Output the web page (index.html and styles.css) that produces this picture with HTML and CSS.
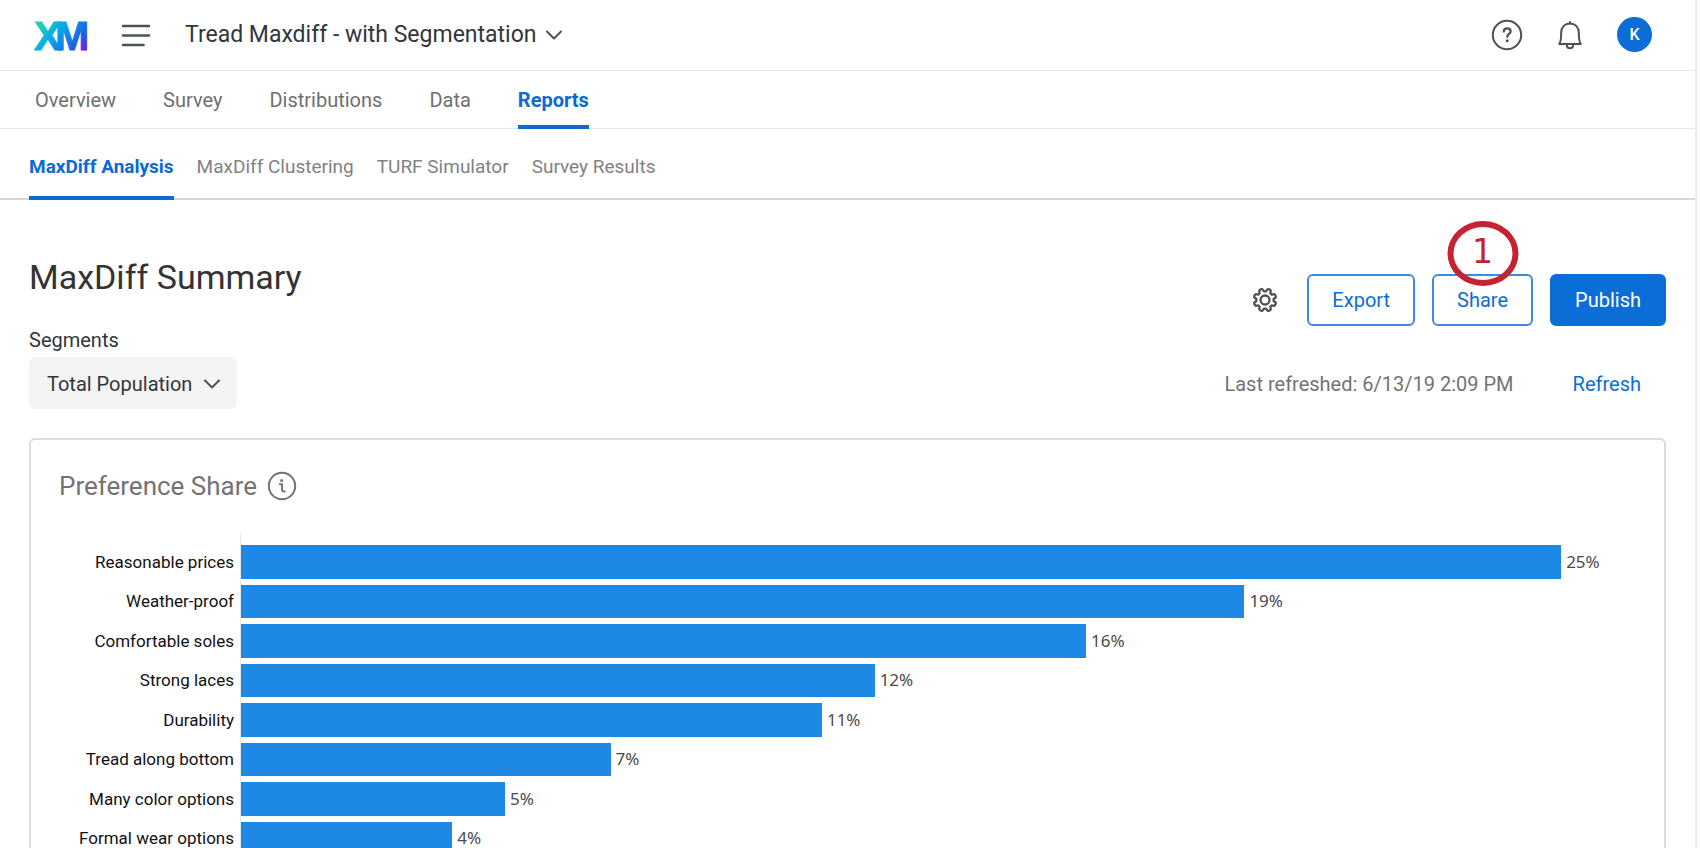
FILE: index.html
```html
<!DOCTYPE html>
<html lang="en">
<head>
<meta charset="utf-8">
<meta name="viewport" content="width=device-width, initial-scale=1">
<title>MaxDiff Summary</title>
<link rel="stylesheet" href="styles.css">
</head>
<body>
<div class="app">
  <header class="topbar">
    <a class="logo" href="#" aria-label="XM home">
      <svg width="60" height="54" viewBox="0 -10 60 54">
        <defs>
          <linearGradient id="xm" gradientUnits="userSpaceOnUse" x1="6" y1="0" x2="50" y2="36">
            <stop offset="0" stop-color="#21dbaa"/>
            <stop offset="0.4" stop-color="#06a6ee"/>
            <stop offset="0.75" stop-color="#1668e0"/>
            <stop offset="1" stop-color="#6a1be8"/>
          </linearGradient>
        </defs>
        <text class="logo-text" x="0 21" y="32" fill="url(#xm)" stroke="url(#xm)">XM</text>
      </svg>
    </a>
    <button class="icon-btn menu-btn" type="button" aria-label="Menu">
      <svg width="30" height="24" viewBox="0 0 30 24" fill="none" stroke="#4d5258" stroke-width="2.6" stroke-linecap="round"><path d="M2 3h26M2 12.500h26M2 22h20.500"/></svg>
    </button>
    <button class="project-btn" type="button">Tread Maxdiff - with Segmentation
      <svg width="18" height="12" viewBox="0 0 18 12" fill="none" stroke="#4d5258" stroke-width="2" stroke-linecap="round" stroke-linejoin="round"><path d="M2 2.500l7 7 7-7"/></svg>
    </button>
    <div class="tools">
      <button class="icon-btn" type="button" aria-label="Help">
        <svg width="32" height="32" viewBox="0 0 32 32" fill="none" stroke="#4d5258" stroke-width="2" stroke-linecap="round" stroke-linejoin="round"><circle cx="16" cy="16" r="14.200"/><path stroke-width="2.300" d="M12.800 12.600c0-2 1.400-3.200 3.400-3.200s3.400 1.200 3.400 3c0 2.400-3.300 2.600-3.300 5.400"/><circle cx="16.200" cy="21.700" r="1.500" fill="#4d5258" stroke="none"/></svg>
      </button>
      <button class="icon-btn" type="button" aria-label="Notifications">
        <svg width="26" height="30" viewBox="0 0 26 30" fill="none" stroke="#4d5258" stroke-width="2" stroke-linejoin="round"><path d="M2.200 24c1.500-1.700 2-4.500 2-11.500C4.200 7 8 3.400 13 3.400S21.800 7 21.800 12.500c0 7 .5 9.800 2 11.500z"/><path stroke-linecap="round" d="M13 3.400V2M9.800 25.500c.3 1.700 1.500 2.700 3.200 2.700s2.900-1 3.200-2.700"/></svg>
      </button>
      <button class="avatar" type="button" aria-label="Account">K</button>
    </div>
  </header>

  <nav class="tabs tabs-main" aria-label="Project">
    <a class="tab" href="#">Overview</a>
    <a class="tab" href="#">Survey</a>
    <a class="tab" href="#">Distributions</a>
    <a class="tab" href="#">Data</a>
    <a class="tab active" href="#">Reports</a>
  </nav>
  <nav class="tabs tabs-sub" aria-label="Reports">
    <a class="tab active" href="#">MaxDiff Analysis</a>
    <a class="tab" href="#">MaxDiff Clustering</a>
    <a class="tab" href="#">TURF Simulator</a>
    <a class="tab" href="#">Survey Results</a>
  </nav>

  <main class="content">
    <section class="summary">
      <div class="summary-left">
        <h1>MaxDiff Summary</h1>
        <label for="segment">Segments</label>
        <div class="select-wrap">
          <select id="segment"><option>Total Population</option></select>
          <svg class="select-arrow" width="18" height="12" viewBox="0 0 18 12" fill="none" stroke="#4d5258" stroke-width="2" stroke-linecap="round" stroke-linejoin="round"><path d="M2 2.500l7 7 7-7"/></svg>
        </div>
      </div>
      <div class="summary-right">
        <div class="actions">
          <button class="icon-btn" type="button" aria-label="Settings">
            <svg width="26" height="26" viewBox="0 0 26 26" fill="none" stroke="#4d5258" stroke-width="2.300" stroke-linejoin="round"><path d="M10.6 4.700L11.200 2.200Q13 .8 14.800 2.200L15.400 4.700 17.200 5.400 19.400 4.100Q21.600 4.400 21.900 6.600L20.600 8.800 21.300 10.600 23.800 11.200Q25.200 13 23.800 14.800L21.300 15.400 20.600 17.200 21.900 19.400Q21.600 21.600 19.400 21.900L17.200 20.600 15.400 21.300 14.800 23.800Q13 25.200 11.200 23.800L10.600 21.300 8.800 20.600 6.600 21.900Q4.400 21.600 4.100 19.400L5.400 17.200 4.700 15.400 2.200 14.800Q.8 13 2.200 11.200L4.700 10.600 5.400 8.800 4.100 6.600Q4.400 4.400 6.600 4.100L8.800 5.400z" transform="rotate(22.500 13 13)"/><circle cx="13" cy="13" r="4.500"/></svg>
          </button>
          <button class="btn" type="button">Export</button>
          <div class="marked">
            <button class="btn" type="button">Share</button>
            <span class="marker">1</span>
          </div>
          <button class="btn primary" type="button">Publish</button>
        </div>
        <div class="refresh-row">
          <span>Last refreshed: 6/13/19 2:09 PM</span>
          <button class="link-btn" type="button">Refresh</button>
        </div>
      </div>
    </section>

    <section class="card">
      <h2>Preference Share
        <svg width="30" height="30" viewBox="0 0 30 30" fill="none" stroke="#737373" stroke-width="2" stroke-linecap="round" stroke-linejoin="round"><circle cx="15" cy="15" r="13.200"/><path d="M12.800 13.200h2.300v5.300c0 1.300.6 1.900 1.700 1.900h1"/><circle cx="14.600" cy="9.500" r="1.500" fill="#737373" stroke="none"/></svg>
      </h2>
      <div class="chart">
        <div class="labels">
          <span>Reasonable prices</span><span>Weather-proof</span><span>Comfortable soles</span><span>Strong laces</span><span>Durability</span><span>Tread along bottom</span><span>Many color options</span><span>Formal wear options</span>
        </div>
        <div class="plot">
          <div class="row"><div class="bar" style="width:96.15%"></div><span>25%</span></div>
          <div class="row"><div class="bar" style="width:73.08%"></div><span>19%</span></div>
          <div class="row"><div class="bar" style="width:61.54%"></div><span>16%</span></div>
          <div class="row"><div class="bar" style="width:46.15%"></div><span>12%</span></div>
          <div class="row"><div class="bar" style="width:42.31%"></div><span>11%</span></div>
          <div class="row"><div class="bar" style="width:26.92%"></div><span>7%</span></div>
          <div class="row"><div class="bar" style="width:19.23%"></div><span>5%</span></div>
          <div class="row"><div class="bar" style="width:15.38%"></div><span>4%</span></div>
        </div>
      </div>
    </section>
  </main>
</div>
</body>
</html>
```

FILE: styles.css
```css
* { box-sizing: border-box; }
body {
  margin: 0;
  background: #fbfbfb;
  color: #32363a;
  font-family: Roboto, "Liberation Sans", sans-serif;
  font-size: 20px;
}
button, select { font: inherit; color: inherit; margin: 0; cursor: pointer; }
button { border: 0; padding: 0; background: none; }
a { color: inherit; text-decoration: none; }
svg { display: block; flex: none; }

.app {
  height: 100vh;
  overflow: hidden;
  margin-right: 3px;
  border-right: 2px solid #ededed;
  background: #fff;
}

.topbar {
  display: flex;
  align-items: center;
  height: 71px;
  padding: 0 43px 1px 34px;
  border-bottom: 1px solid #e6e6e6;
}
.logo-text {
  font-family: "Liberation Sans", sans-serif;
  font-size: 41px;
  font-weight: 700;
}
.menu-btn { margin-left: 27px; }
.project-btn {
  display: flex;
  align-items: center;
  gap: 8px;
  margin-left: 34px;
  font-size: 23px;
}
.tools { display: flex; align-items: center; gap: 34px; margin-left: auto; }
.avatar {
  width: 35px;
  height: 35px;
  border-radius: 50%;
  background: #0b6ed6;
  color: #fff;
  font-size: 16px;
  font-weight: 500;
}

.tabs { display: flex; }
.tab { display: flex; align-items: center; border-bottom: 4px solid transparent; padding-top: 4px; margin-bottom: -1px; }
.tab.active { color: #0b6ad4; border-color: #0b6ad4; font-weight: 700; }
.tabs-main {
  gap: 47px;
  height: 58px;
  padding: 0 35px;
  border-bottom: 1px solid #e6e6e6;
  color: #6f6f6f;
}
.tabs-sub {
  gap: 23px;
  height: 71px;
  padding: 0 29px;
  border-bottom: 2px solid #d6d6d6;
  color: #828282;
  font-size: 19px;
}
.tabs-sub .tab { padding-top: 8px; margin-bottom: -2px; }

.content { padding: 57px 29px 0; }
.summary { display: flex; justify-content: space-between; }
h1 { margin: 0 0 31px; font-size: 34px; font-weight: 400; line-height: 40px; color: #333; }
label { display: block; margin-bottom: 5px; line-height: 24px; }
.select-wrap { position: relative; width: 208px; }
select {
  appearance: none;
  width: 100%;
  height: 52px;
  padding: 1px 40px 0 18px;
  border: 0;
  border-radius: 6px;
  background: #f4f4f4;
}
.select-arrow { position: absolute; right: 16px; top: 21px; pointer-events: none; }

.summary-right { display: flex; flex-direction: column; align-items: flex-end; padding-top: 17px; }
.actions { display: flex; align-items: center; gap: 17px; }
.actions .icon-btn { margin-right: 12px; }
.btn {
  height: 52px;
  padding: 0 23px;
  border: 2px solid #3d8ade;
  border-radius: 6px;
  background: #fff;
  color: #0b6ed6;
}
.btn.primary { background: #0b6ed6; border-color: #0b6ed6; color: #fff; }
.marked { position: relative; }
.marker {
  position: absolute;
  left: 50%;
  top: -53px;
  transform: translateX(-50%);
  width: 71px;
  height: 65px;
  border: 6px solid #c52331;
  border-radius: 50%;
  color: #c52331;
  font: 33px/50px "DejaVu Sans", sans-serif;
  text-align: center;
}
.refresh-row { display: flex; gap: 59px; margin-top: 46px; padding-right: 25px; line-height: 24px; color: #737373; }
.link-btn { color: #0b6ed6; }

.card { margin-top: 29px; padding: 29px 50px 30px 28px; border: 2px solid #dcdcdc; border-radius: 6px; }
h2 { display: flex; align-items: center; gap: 10px; margin: 0; font-size: 26px; font-weight: 400; line-height: 34px; color: #737373; }

.chart { display: flex; margin-top: 29px; }
.labels, .plot { display: grid; grid-template-rows: repeat(8, 1fr); gap: 6px; height: 323px; padding-top: 13px; }
.labels { width: 182px; padding-right: 7px; justify-items: end; align-items: center; font-size: 17px; line-height: 20px; color: #111; white-space: nowrap; }
.plot { flex: 1; box-shadow: -1px 0 0 #e8e8e8; }
.row { display: flex; align-items: center; gap: 5px; font: 17px/20px "Noto Sans", sans-serif; color: #4a4a4a; }
.bar { flex: none; align-self: stretch; background: #1e88e5; }
```
